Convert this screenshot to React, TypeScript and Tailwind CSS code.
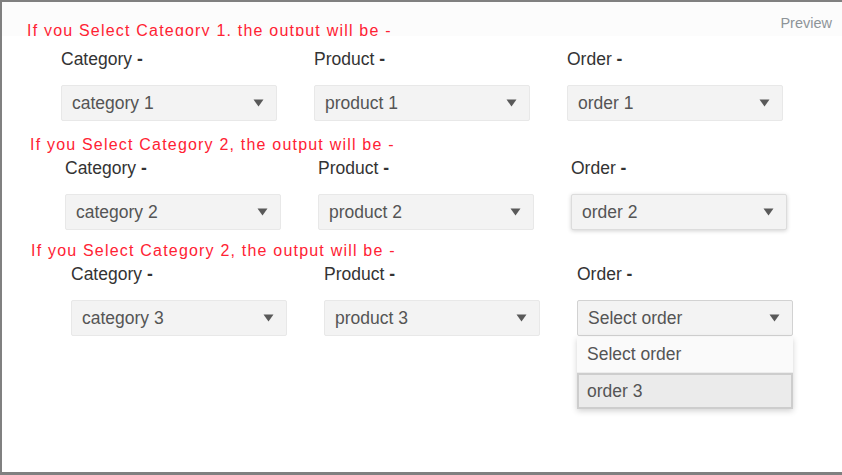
import React from "react";

type Row = { cat: string; prod: string; order: string };

function Arrow() {
  return (
    <svg width="11" height="8" viewBox="0 0 11 8" className="shrink-0">
      <path d="M0.5 0.5 L10.5 0.5 L5.5 7.5 Z" fill="#595959" />
    </svg>
  );
}

function SelectBox({ value, variant = "plain" }: { value: string; variant?: "plain" | "focus" | "open" }) {
  const cls =
    variant === "focus"
      ? "border-[#dcdcdc] shadow-[0_1px_4px_rgba(0,0,0,0.18)]"
      : variant === "open"
      ? "border-[#d2d2d2]"
      : "border-[#e8e8e8]";
  return (
    <div
      className={`flex h-[36px] w-[216px] items-center justify-between rounded-[2px] border bg-[#f3f3f3] pl-[10px] pr-[12px] text-[17.5px] text-[#555] ${cls}`}
    >
      <span>{value}</span>
      <Arrow />
    </div>
  );
}

function Label({ text }: { text: string }) {
  return (
    <div className="h-[20px] text-[17.5px] leading-[20px] text-[#333]">
      {text} <span className="font-bold">-</span>
    </div>
  );
}

function Section({ row, pl, orderVariant, open }: { row: Row; pl: string; orderVariant?: "plain" | "focus" | "open"; open?: boolean }) {
  return (
    <div className={`flex gap-[37px] ${pl}`}>
      <div className="flex w-[216px] flex-col gap-[16px]">
        <Label text="Category" />
        <SelectBox value={row.cat} />
      </div>
      <div className="flex w-[216px] flex-col gap-[16px]">
        <Label text="Product" />
        <SelectBox value={row.prod} />
      </div>
      <div className="relative flex w-[216px] flex-col gap-[16px]">
        <Label text="Order" />
        <SelectBox value={row.order} variant={orderVariant} />
        {open && (
          <div className="absolute left-0 top-[73px] z-10 w-[216px] bg-[#fafafa] text-[17.5px] text-[#555] shadow-[0_2px_6px_rgba(0,0,0,0.18)]">
            <div className="flex h-[36px] items-center border-b border-[#ececec] pl-[10px]">Select order</div>
            <div className="flex h-[36px] items-center border-2 border-[#cdcdcd] bg-[#ebebeb] pl-[8px]">order 3</div>
          </div>
        )}
      </div>
    </div>
  );
}

function RedText({ text, cls }: { text: string; cls: string }) {
  return (
    <div className={`h-[20px] whitespace-nowrap text-[16px] leading-[20px] tracking-[1.2px] text-[#ff2233] ${cls}`}>{text}</div>
  );
}

export default function App() {
  return (
    <div
      className="flex h-[475px] w-[842px] flex-col overflow-hidden border-b-[3px] border-l-2 border-t-2 border-[#808080] bg-white"
      style={{ fontFamily: '"Liberation Sans", Arial, sans-serif' }}
    >
      <div className="flex h-[34px] shrink-0 justify-between overflow-hidden bg-[#fcfcfc]">
        <div className="pt-[19px]">
          <RedText text="If you Select Category 1, the output will be -" cls="pl-[25px]" />
        </div>
        <div className="pr-[10px] pt-[12px] text-[14.5px] leading-[18px] text-[#8e9499]">Preview</div>
      </div>

      <div className="mt-[13px]">
        <Section row={{ cat: "category 1", prod: "product 1", order: "order 1" }} pl="pl-[59px]" />
      </div>

      <div className="mt-[14px]">
        <RedText text="If you Select Category 2, the output will be -" cls="pl-[28px]" />
      </div>
      <div className="mt-[3px]">
        <Section row={{ cat: "category 2", prod: "product 2", order: "order 2" }} pl="pl-[63px]" orderVariant="focus" />
      </div>

      <div className="mt-[11px]">
        <RedText text="If you Select Category 2, the output will be -" cls="pl-[29px]" />
      </div>
      <div className="mt-[3px]">
        <Section
          row={{ cat: "category 3", prod: "product 3", order: "Select order" }}
          pl="pl-[69px]"
          orderVariant="open"
          open
        />
      </div>
    </div>
  );
}
